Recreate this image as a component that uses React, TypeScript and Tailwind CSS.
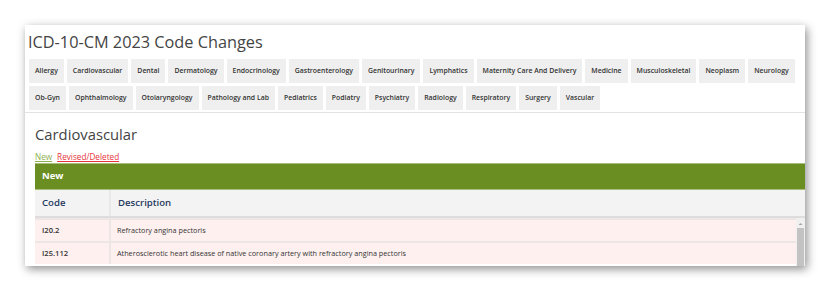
const row1 = [
  "Allergy",
  "Cardiovascular",
  "Dental",
  "Dermatology",
  "Endocrinology",
  "Gastroenterology",
  "Genitourinary",
  "Lymphatics",
  "Maternity Care And Delivery",
  "Medicine",
  "Musculoskeletal",
  "Neoplasm",
  "Neurology",
]

const row2 = [
  "Ob-Gyn",
  "Ophthalmology",
  "Otolaryngology",
  "Pathology and Lab",
  "Pediatrics",
  "Podiatry",
  "Psychiatry",
  "Radiology",
  "Respiratory",
  "Surgery",
  "Vascular",
]

const codes = [
  { code: "I20.2", desc: "Refractory angina pectoris" },
  { code: "I25.112", desc: "Atherosclerotic heart disease of native coronary artery with refractory angina pectoris" },
]

function Tab({ label }: { label: string }) {
  return (
    <button className="h-[24px] px-[6px] bg-[#efefef] text-[6.9px] font-semibold text-[#333] whitespace-nowrap">
      {label}
    </button>
  )
}

export default function App() {
  return (
    <div className="w-[830px] h-[291px] bg-white pt-[25px] pl-[25px] font-['Open_Sans',sans-serif]">
      <div className="w-[780px] h-[241px] bg-white overflow-hidden shadow-[2px_3px_9px_rgba(0,0,0,0.45)]">
        <h1 className="pl-[3px] pt-[5px] text-[16.3px] leading-[24px] text-[#444]">ICD-10-CM 2023 Code Changes</h1>

        <div className="px-[4px] pt-[5px] flex flex-col gap-[3px]">
          <div className="flex gap-[3px]">
            {row1.map(t => <Tab key={t} label={t} />)}
          </div>
          <div className="flex gap-[3px]">
            {row2.map(t => <Tab key={t} label={t} />)}
          </div>
        </div>

        <div className="mt-[2px] border-t border-[#e3e3e3]" />

        <div className="pl-[10px]">
          <h2 className="pt-[10px] text-[14.8px] leading-[22px] text-[#444]">Cardiovascular</h2>
          <div className="mt-[6px] flex gap-[5px] text-[8.2px] leading-[12px]">
            <a className="underline text-[#8db04f]">New</a>
            <a className="underline text-[#e8333b]">Revised/Deleted</a>
          </div>

          <div className="h-[27px] flex items-center px-[7px] bg-[#6b8e23] border-t border-b border-[#a9bd7c] text-white text-[9.5px] font-bold">
            New
          </div>

          <div className="grid grid-cols-[76px_1fr] h-[28px] bg-[#f4f3f4] border-b-2 border-[#dedcdc] text-[9.6px] font-semibold text-[#1f3a5f]">
            <div className="flex items-center px-[7px] border-r-2 border-[#e8e8e8]">Code</div>
            <div className="flex items-center px-[7px]">Description</div>
          </div>

          <div className="flex">
            <div className="flex-1 flex flex-col">
              {codes.map(r => (
                <div key={r.code} className="grid grid-cols-[76px_1fr] h-[23px] bg-[#fdf0ef] border-t-2 border-[#ece6e5] text-[#333]">
                  <div className="flex items-center px-[7px] border-r-2 border-[#ece6e5] text-[7.6px] font-semibold">{r.code}</div>
                  <div className="flex items-center px-[6px] text-[7.25px]">{r.desc}</div>
                </div>
              ))}
            </div>
            <div className="w-[9px] bg-[#f0f0f0] flex flex-col items-center">
              <svg width="9" height="8" viewBox="0 0 9 8" className="mt-[2px]">
                <path d="M2.5 5 L4.5 3 L6.5 5 Z" fill="#a3a3a3" />
              </svg>
              <div className="w-[7px] h-[80px] bg-[#c3c3c3]" />
            </div>
          </div>
        </div>
      </div>
    </div>
  )
}
